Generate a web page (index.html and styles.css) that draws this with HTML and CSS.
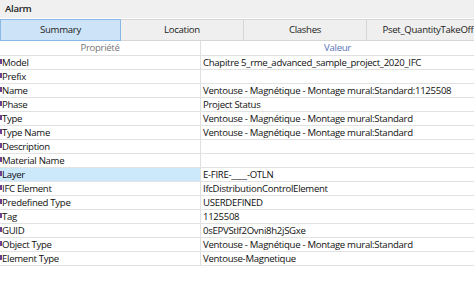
FILE: index.html
```html
<!DOCTYPE html>
<html lang="fr">
<head>
  <meta charset="UTF-8">
  <title>Alarm</title>
  <link rel="stylesheet" href="styles.css">
</head>
<body>
  <div class="titlebar">Alarm</div>

  <div class="tabs">
    <div class="tab active">Summary</div>
    <div class="tab">Location</div>
    <div class="tab">Clashes</div>
    <div class="tab">Pset_QuantityTakeOff</div>
  </div>

  <table class="props">
    <thead>
      <tr>
        <th class="col-name">Propriété</th>
        <th class="col-value">Valeur</th>
      </tr>
    </thead>
    <tbody>
      <tr><td>Model</td><td>Chapitre 5_rme_advanced_sample_project_2020_IFC</td></tr>
      <tr><td>Prefix</td><td></td></tr>
      <tr><td>Name</td><td>Ventouse - Magnétique - Montage mural:Standard:1125508</td></tr>
      <tr><td>Phase</td><td>Project Status</td></tr>
      <tr><td>Type</td><td>Ventouse - Magnétique - Montage mural:Standard</td></tr>
      <tr><td>Type Name</td><td>Ventouse - Magnétique - Montage mural:Standard</td></tr>
      <tr><td>Description</td><td></td></tr>
      <tr><td>Material Name</td><td></td></tr>
      <tr class="selected"><td>Layer</td><td>E-FIRE-____-OTLN</td></tr>
      <tr><td>IFC Element</td><td>IfcDistributionControlElement</td></tr>
      <tr><td>Predefined Type</td><td>USERDEFINED</td></tr>
      <tr><td>Tag</td><td>1125508</td></tr>
      <tr><td>GUID</td><td>0sEPVStlf2Ovni8h2jSGxe</td></tr>
      <tr><td>Object Type</td><td>Ventouse - Magnétique - Montage mural:Standard</td></tr>
      <tr><td>Element Type</td><td>Ventouse-Magnetique</td></tr>
    </tbody>
  </table>
</body>
</html>
```

FILE: styles.css
```css
body {
  margin: 0;
  width: 474px;
  height: 292px;
  overflow: hidden;
  background: #fff;
  font-family: "Open Sans", "Noto Sans", sans-serif;
  font-size: 9.6px;
  letter-spacing: -0.3px;
  color: #111;
}

.titlebar {
  height: 18px;
  line-height: 18px;
  padding-left: 5px;
  background: #f0f0f0;
  font-weight: 600;
  color: #222;
}

.tabs {
  display: flex;
  height: 22px;
  margin-top: 1px;
  background: #f0f0f0;
  white-space: nowrap;
  overflow: hidden;
}

.tab {
  flex: 0 0 123px;
  box-sizing: border-box;
  line-height: 20px;
  text-align: center;
  background: #efefef;
  border: 1px solid #d6d6d6;
  border-left: none;
  color: #222;
}

.tab.active {
  flex-basis: 121px;
  background: #cde3f7;
  border: 1px solid #8ab8e4;
}

.tab:last-child {
  flex: 0 0 116px;
  padding-left: 6px;
  border-right: none;
}

.props {
  width: 100%;
  border-collapse: collapse;
  table-layout: fixed;
}

.props th {
  height: 14px;
  padding: 0;
  font-weight: normal;
  text-align: center;
  border-bottom: 1px solid #e0e0e0;
  line-height: 14px;
}

.props .col-name {
  width: 200px;
  color: #777;
  border-right: 1px solid #e0e0e0;
}

.props .col-value {
  color: #5a74b8;
}

.props td {
  height: 13px;
  padding: 0 0 0 2px;
  line-height: 13px;
  border-bottom: 1px solid #e2e2e2;
  white-space: nowrap;
  overflow: hidden;
}

.props td:first-child {
  position: relative;
  border-right: 1px solid #e0e0e0;
}

.props td:first-child::before {
  content: "";
  position: absolute;
  left: 0;
  top: 3px;
  width: 2px;
  height: 5px;
  background: #6b3f8f;
}

.props .selected td:first-child {
  background: #cce8fb;
}
```
